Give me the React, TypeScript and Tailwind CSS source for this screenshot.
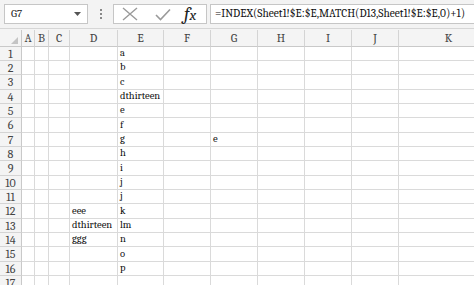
const cols = [
  { key: 'A', w: 'w-[13px]' },
  { key: 'B', w: 'w-[14px]' },
  { key: 'C', w: 'w-[21px]' },
  { key: 'D', w: 'w-[48px]' },
  { key: 'E', w: 'w-[46px]' },
  { key: 'F', w: 'w-[47px]' },
  { key: 'G', w: 'w-[47px]' },
  { key: 'H', w: 'w-[47px]' },
  { key: 'I', w: 'w-[47px]' },
  { key: 'J', w: 'w-[47px]' },
  { key: 'K', w: 'w-[100px]' }
];

const cells: Record<string, string> = {
  E1: 'a',
  E2: 'b',
  E3: 'c',
  E4: 'dthirteen',
  E5: 'e',
  E6: 'f',
  E7: 'g',
  G7: 'e',
  E8: 'h',
  E9: 'i',
  E10: 'j',
  E11: 'j',
  D12: 'eee',
  E12: 'k',
  D13: 'dthirteen',
  E13: 'lm',
  D14: 'ggg',
  E14: 'n',
  E15: 'o',
  E16: 'p'
};

const rows = Array.from({ length: 17 }, (_, i) => i + 1);

function FormulaBar() {
  return (
    <div className="flex h-[29px] shrink-0 items-center border-b border-[#d6d6d6] bg-[#f3f3f3] pl-[4px]">
      <div className="flex h-[20px] w-[84px] items-center justify-between border border-[#c6c6c6] bg-white pl-[6px] pr-[6px] text-[11px] text-[#222]">
        <span>G7</span>
        <svg width="7" height="4" viewBox="0 0 7 4">
          <path d="M0 0h7L3.5 4z" fill="#555" />
        </svg>
      </div>
      <div className="flex w-[25px] flex-col items-center gap-[2px]">
        <span className="h-[2px] w-[2px] bg-[#888]" />
        <span className="h-[2px] w-[2px] bg-[#888]" />
        <span className="h-[2px] w-[2px] bg-[#888]" />
      </div>
      <div className="flex h-[20px] w-[94px] items-center border border-[#c6c6c6] bg-white">
        <svg className="ml-[8px]" width="16" height="14" viewBox="0 0 16 14">
          <path d="M1 1l14 12M15 1L1 13" stroke="#9a9a9a" strokeWidth="1.4" fill="none" />
        </svg>
        <svg className="ml-[17px]" width="16" height="13" viewBox="0 0 16 13">
          <path d="M1 7l4.5 4.5L15 1.5" stroke="#9a9a9a" strokeWidth="1.6" fill="none" />
        </svg>
        <span className="ml-[13px] text-[19px] italic leading-none text-[#222]">
          f<span className="text-[15px]">x</span>
        </span>
      </div>
      <div className="ml-[3px] flex h-[20px] flex-1 items-center whitespace-nowrap border border-r-0 border-[#c6c6c6] bg-white pl-[4px] text-[11.4px] text-[#111]">
        =INDEX(Sheet1!$E:$E,MATCH(D13,Sheet1!$E:$E,0)+1)
      </div>
    </div>
  );
}

function HeaderRow() {
  return (
    <div className="flex h-[18px] shrink-0 bg-[#f4f4f4] pt-[1px] text-[12px] text-[#444]">
      <div className="relative w-[22px] shrink-0 border-b border-r border-[#c9c9c9]">
        <svg className="absolute bottom-[2px] right-[3px]" width="7" height="7" viewBox="0 0 7 7">
          <path d="M7 0v7H0z" fill="#c4c4c4" />
        </svg>
      </div>
      {cols.map((c) => (
        <div
          key={c.key}
          className={`${c.w} flex shrink-0 items-center justify-center border-b border-r border-[#d4d4d4] border-b-[#c9c9c9]`}
        >
          {c.key}
        </div>
      ))}
    </div>
  );
}

export default function App() {
  return (
    <div className="flex h-[285px] w-[474px] flex-col overflow-hidden bg-white font-serif">
      <FormulaBar />
      <HeaderRow />
      <div className="flex flex-col">
        {rows.map((r, i) => (
          <div key={r} className={`flex shrink-0 ${i % 3 === 2 ? 'h-[15px]' : 'h-[14px]'}`}>
            <div className="flex w-[22px] shrink-0 items-center justify-center border-b border-r border-[#d4d4d4] border-r-[#c9c9c9] bg-[#f4f4f4] text-[12px] text-[#444]">
              {r}
            </div>
            {cols.map((c) => (
              <div
                key={c.key}
                className={`${c.w} flex shrink-0 items-end overflow-visible whitespace-nowrap border-b border-r border-[#dadada] pl-[2px] text-[10.5px] leading-[13px] text-[#111]`}
              >
                {cells[`${c.key}${r}`] ?? ''}
              </div>
            ))}
          </div>
        ))}
      </div>
    </div>
  );
}
